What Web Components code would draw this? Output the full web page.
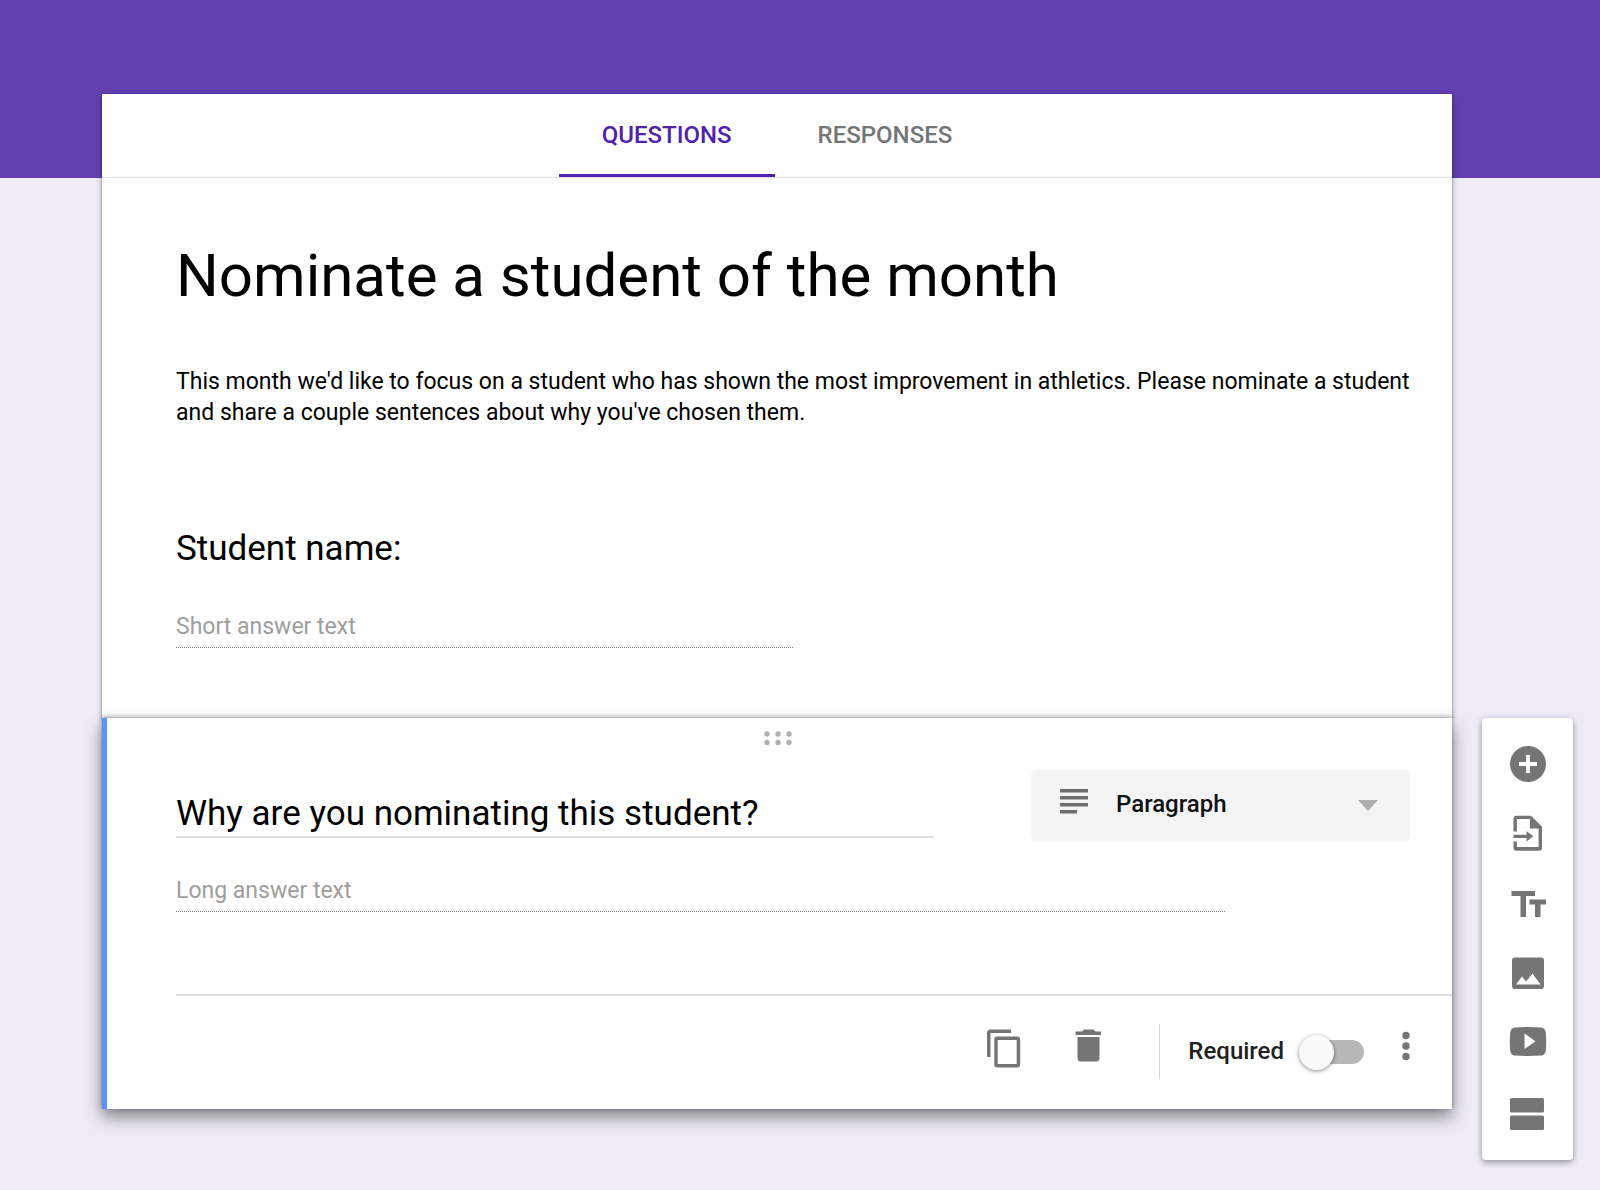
<!DOCTYPE html>
<html lang="en">
<head>
<meta charset="utf-8">
<meta name="viewport" content="width=device-width, initial-scale=1">
<title>Form editor</title>
<style>
	:root {
		--purple: #6140b0;
		--accent: #5122ae;
		--pageBg: #eeebf7;
		--selected: #5b92fb;
		--icon: #757575;
		--line: #e0e0e0;
		--muted: #9e9e9e;
	}

	body {
		margin: 0;
		background: var(--pageBg);
		color: #000;
		font-family: Roboto, "Liberation Sans", sans-serif;
		font-size: 23px;
		line-height: 31px;
	}
</style>
</head>
<body>
<form-editor>
	<form-tabs slot="tabs"></form-tabs>
	<form-heading>
		<span slot="title">Nominate a student of the month</span>
		This month we'd like to focus on a student who has shown the most improvement in athletics. Please nominate a student and share a couple sentences about why you've chosen them.
	</form-heading>
	<form-question answer="Short answer text">Student name:</form-question>
	<form-question-editor slot="selected" value="Why are you nominating this student?" answer="Long answer text"></form-question-editor>
	<form-toolbar slot="toolbar"></form-toolbar>
</form-editor>

<script>
// Icon shapes, drawn around the centre of a 48x48 box
const ICONS = {
	add: `<path fill-rule="evenodd" d="M24 6a18 18 0 1 0 0 36a18 18 0 1 0 0-36zM22 15h4v7h7v4h-7v7h-4v-7h-7v-4h7z"/>`,
	import: `<path d="M13 5.700h14l11 11v21q0 3-3 3H12.500q-3 0-3-3V31.500h3.400v5.500h21.700V18.500H26V9H12.900v12.500H9.500V8.700q0-3 3-3z"/><path d="M9.500 24.700h13v-3.700l6.800 5.300-6.800 5.200v-3.500h-13z"/>`,
	text: `<path d="M7.500 11h23.500v5h-9v21h-5.500V16h-9zM25.500 19.500h16.500v5h-5.500V37h-5.500V24.500h-5.500z"/>`,
	image: `<path fill-rule="evenodd" d="M11 7.500h26q3 0 3 3v25.500q0 3-3 3H11q-3 0-3-3V10.500q0-3 3-3zM12 34.500h24.500l-8-11-6.500 8-4-5z"/>`,
	video: `<path fill-rule="evenodd" d="M11 7.500Q24 6.500 37 7.500q4 .300 4.700 4.500q1 9.500 0 19q-.700 4.300-4.700 4.600Q24 36.500 11 35.600q-4-.300-4.700-4.600q-1-9.500 0-19q.700-4.200 4.700-4.500zM20.500 13.500v15.500l11-7.700z"/>`,
	section: `<rect x="6" y="8" width="34" height="14.500" rx="1.500"/><rect x="6" y="25.500" width="34" height="14.500" rx="1.500"/>`,
	copy: `<path d="M31 1.500H10.500q-3.500 0-3.500 3.500V29h3.500V5H31z"/><path fill-rule="evenodd" d="M17.500 8.500h19.500q3.200 0 3.200 3.200v24.500q0 3.200-3.200 3.200H17.500q-3.200 0-3.200-3.200V11.700q0-3.200 3.200-3.200zM17.700 12v24h19V12z"/>`,
	trash: `<path d="M11.500 3.500H18l2-2h9.500l2 2H37V7H11.500zM13.500 9h22v21q0 3.500-3.500 3.500H17q-3.500 0-3.500-3.500z"/>`,
	more: `<circle cx="24" cy="7.500" r="3.700"/><circle cx="24" cy="18" r="3.700"/><circle cx="24" cy="28.500" r="3.700"/>`,
};

class FormEditor extends HTMLElement {
	constructor() {
		super();
		this.attachShadow({ mode: "open" }).innerHTML = `
			<style>
				:host {
					display: block;
					background: linear-gradient(var(--purple) 178px, transparent 178px);
				}
				.layout {
					display: grid;
					grid-template-columns: minmax(0, 1fr) 91px;
					column-gap: 30px;
					align-items: start;
					padding: 94px 27px 30px 102px;
				}
				.sheet {
					grid-column: 1 / 2;
					background: #fff;
					box-shadow: 0 0 0 1px rgba(59, 0, 145, 0.1), 0 2px 5px rgba(0, 0, 0, 0.4);
					padding-bottom: 70px;
				}
				.fields {
					display: flex;
					flex-direction: column;
					gap: 100px;
					padding: 62px 42px 0 74px;
				}
				.selected {
					grid-area: 2 / 1;
				}
				.tools {
					grid-area: 2 / 2;
				}
			</style>
			<main class="layout">
				<section class="sheet">
					<slot name="tabs"></slot>
					<div class="fields"><slot></slot></div>
				</section>
				<section class="selected"><slot name="selected"></slot></section>
				<aside class="tools"><slot name="toolbar"></slot></aside>
			</main>
		`;
	}
}

class FormTabs extends HTMLElement {
	constructor() {
		super();
		this.attachShadow({ mode: "open" }).innerHTML = `
			<style>
				:host {
					display: block;
					border-bottom: 1px solid var(--line);
				}
				nav {
					display: flex;
					justify-content: center;
				}
				button {
					padding: 27px 43px 25px;
					border: 0;
					border-bottom: 3px solid transparent;
					background: none;
					color: var(--icon);
					font: 500 24px/28px Roboto, sans-serif;
					cursor: pointer;
				}
				button[aria-selected="true"] {
					border-bottom-color: var(--accent);
					color: var(--accent);
				}
			</style>
			<nav role="tablist">
				<button type="button" role="tab" aria-selected="true">QUESTIONS</button>
				<button type="button" role="tab" aria-selected="false">RESPONSES</button>
			</nav>
		`;
		this.shadowRoot.querySelector("nav").addEventListener("click", (event) => {
			const tab = event.target.closest("button");
			if (!tab) return;
			this.shadowRoot.querySelectorAll("button").forEach((button) => {
				button.setAttribute("aria-selected", String(button === tab));
			});
		});
	}
}

class FormHeading extends HTMLElement {
	constructor() {
		super();
		this.attachShadow({ mode: "open" }).innerHTML = `
			<style>
				:host {
					display: block;
				}
				h1 {
					margin: 0 0 54px;
					font-size: 60px;
					font-weight: 400;
					line-height: 72px;
				}
				p {
					margin: 0;
				}
			</style>
			<h1><slot name="title"></slot></h1>
			<p><slot></slot></p>
		`;
	}
}

// Styles of the dotted answer line, shared by both kinds of question
const ANSWER_STYLE = `
	.answer {
		display: block;
		box-sizing: border-box;
		height: 37px;
		padding: 0 0 6px;
		border: 0;
		border-bottom: 1px dotted #757575;
		border-radius: 0;
		background: none;
		font: 400 23px/30px Roboto, sans-serif;
		outline: none;
	}
	.answer::placeholder {
		color: var(--muted);
		opacity: 1;
	}
`;

class FormQuestion extends HTMLElement {
	connectedCallback() {
		if (this.shadowRoot) return;
		this.attachShadow({ mode: "open" }).innerHTML = `
			<style>
				${ANSWER_STYLE}
				:host {
					display: block;
				}
				label {
					display: block;
					margin-bottom: 41px;
					font-size: 35px;
					line-height: 42px;
				}
				.answer {
					width: 50%;
				}
			</style>
			<label for="answer"><slot></slot></label>
			<input class="answer" id="answer" type="text" placeholder="${this.getAttribute("answer")}">
		`;
	}
}

class FormQuestionEditor extends HTMLElement {
	connectedCallback() {
		if (this.shadowRoot) return;
		this.attachShadow({ mode: "open" }).innerHTML = `
			<style>
				${ANSWER_STYLE}
				:host {
					display: block;
					border-left: 5px solid var(--selected);
					background: #fff;
					box-shadow: 0 -1px 4px rgba(0, 0, 0, 0.35), 0 8px 16px rgba(0, 0, 0, 0.45);
				}
				.handle {
					display: block;
					margin: 0 auto;
					padding: 13px 3px 11px 0;
					fill: #b0b0b0;
				}
				.body {
					padding: 13px 42px 82px 69px;
				}
				.row {
					display: flex;
					align-items: flex-start;
					gap: 97px;
					margin-bottom: 34px;
				}
				.question {
					flex: 1;
					min-width: 0;
					box-sizing: border-box;
					height: 46px;
					margin: 22px 0 0;
					padding: 0 0 2px;
					border: 0;
					border-bottom: 2px solid var(--line);
					background: none;
					color: #000;
					font: 400 35px/42px Roboto, sans-serif;
					outline: none;
				}
				.answer {
					width: 85%;
				}
				footer {
					display: flex;
					align-items: center;
					justify-content: flex-end;
					margin-left: 69px;
					padding: 28px 22px 30px 0;
					border-top: 2px solid var(--line);
				}
				.actions {
					display: flex;
					gap: 36px;
					margin-right: 47px;
				}
				.divider {
					width: 1px;
					height: 55px;
					margin-right: 28px;
					background: #d6d6d6;
				}
				form-switch {
					margin-right: 18px;
				}
			</style>
			<svg class="handle" width="28" height="15" viewBox="0 0 28 15" aria-hidden="true">
				<circle cx="3" cy="3" r="2.700"/><circle cx="14" cy="3" r="2.700"/><circle cx="25" cy="3" r="2.700"/>
				<circle cx="3" cy="11.500" r="2.700"/><circle cx="14" cy="11.500" r="2.700"/><circle cx="25" cy="11.500" r="2.700"/>
			</svg>
			<div class="body">
				<div class="row">
					<input class="question" type="text" aria-label="Question" value="${this.getAttribute("value")}">
					<type-select></type-select>
				</div>
				<input class="answer" type="text" aria-label="Answer" placeholder="${this.getAttribute("answer")}">
			</div>
			<footer>
				<div class="actions">
					<icon-button icon="copy" label="Duplicate"></icon-button>
					<icon-button icon="trash" label="Delete"></icon-button>
				</div>
				<span class="divider"></span>
				<form-switch>Required</form-switch>
				<icon-button icon="more" label="More options"></icon-button>
			</footer>
		`;
	}
}

class TypeSelect extends HTMLElement {
	constructor() {
		super();
		this.attachShadow({ mode: "open" }).innerHTML = `
			<style>
				:host {
					display: grid;
					grid-template-columns: 85px 1fr 72px;
					align-items: center;
					flex: 0 0 379px;
					height: 71px;
					border-radius: 5px;
					background: #f4f4f4;
				}
				select {
					grid-area: 1 / 1 / 2 / 4;
					width: 100%;
					height: 100%;
					padding: 0 72px 4px 85px;
					border: 0;
					appearance: none;
					background: none;
					color: #111;
					font: 500 24px/28px Roboto, sans-serif;
					cursor: pointer;
				}
				svg {
					grid-row: 1;
					pointer-events: none;
				}
				.lines {
					grid-column: 1;
					margin-left: 29px;
					fill: #6e6e6e;
				}
				.caret {
					grid-column: 3;
					margin-left: 20px;
					fill: #b0b0b0;
				}
			</style>
			<select aria-label="Question type">
				<option>Paragraph</option>
			</select>
			<svg class="lines" width="28" height="34" viewBox="0 0 28 34" aria-hidden="true">
				<path d="M0 0h28v3.500H0zM0 7h28v3.500H0zM0 14h28v3.500H0zM0 21h17v3.500H0z"/>
			</svg>
			<svg class="caret" width="20" height="11" viewBox="0 0 20 11" aria-hidden="true">
				<path d="M0 0h20L10 11z"/>
			</svg>
		`;
	}
}

class FormSwitch extends HTMLElement {
	constructor() {
		super();
		this.attachShadow({ mode: "open" }).innerHTML = `
			<style>
				:host {
					display: block;
				}
				label {
					display: flex;
					align-items: center;
					gap: 15px;
					padding-bottom: 2px;
					color: #212121;
					font-size: 24px;
					font-weight: 500;
					line-height: 28px;
					cursor: pointer;
				}
				input {
					display: grid;
					align-items: center;
					width: 65px;
					height: 36px;
					margin: 3px 0 0;
					appearance: none;
				}
				input::before,
				input::after {
					grid-area: 1 / 1;
					content: "";
				}
				input::before {
					height: 24px;
					margin-left: 10px;
					border-radius: 12px;
					background: #b8b8b8;
				}
				input::after {
					width: 35px;
					height: 35px;
					border-radius: 50%;
					background: #fafafa;
					box-shadow: 0 1px 4px rgba(0, 0, 0, 0.45);
				}
				input:checked::after {
					justify-self: end;
					background: var(--purple);
				}
			</style>
			<label><slot></slot><input type="checkbox" role="switch"></label>
		`;
	}
}

class IconButton extends HTMLElement {
	connectedCallback() {
		if (this.shadowRoot) return;
		this.attachShadow({ mode: "open" }).innerHTML = `
			<style>
				:host {
					display: block;
				}
				button {
					display: block;
					padding: 0;
					border: 0;
					background: none;
					cursor: pointer;
				}
				svg {
					display: block;
					fill: var(--icon);
				}
			</style>
			<button type="button" aria-label="${this.getAttribute("label")}">
				<svg width="48" height="48" viewBox="0 0 48 48" aria-hidden="true">${ICONS[this.getAttribute("icon")]}</svg>
			</button>
		`;
	}
}

class FormToolbar extends HTMLElement {
	constructor() {
		super();
		this.attachShadow({ mode: "open" }).innerHTML = `
			<style>
				:host {
					display: flex;
					flex-direction: column;
					align-items: center;
					gap: 22px;
					padding: 22px 0;
					border-radius: 4px;
					background: #fff;
					box-shadow: 0 2px 6px rgba(0, 0, 0, 0.4);
				}
			</style>
			<icon-button icon="add" label="Add question"></icon-button>
			<icon-button icon="import" label="Import questions"></icon-button>
			<icon-button icon="text" label="Add title and description"></icon-button>
			<icon-button icon="image" label="Add image"></icon-button>
			<icon-button icon="video" label="Add video"></icon-button>
			<icon-button icon="section" label="Add section"></icon-button>
		`;
	}
}

customElements.define("icon-button", IconButton);
customElements.define("form-switch", FormSwitch);
customElements.define("type-select", TypeSelect);
customElements.define("form-tabs", FormTabs);
customElements.define("form-heading", FormHeading);
customElements.define("form-question", FormQuestion);
customElements.define("form-question-editor", FormQuestionEditor);
customElements.define("form-toolbar", FormToolbar);
customElements.define("form-editor", FormEditor);
</script>
</body>
</html>
